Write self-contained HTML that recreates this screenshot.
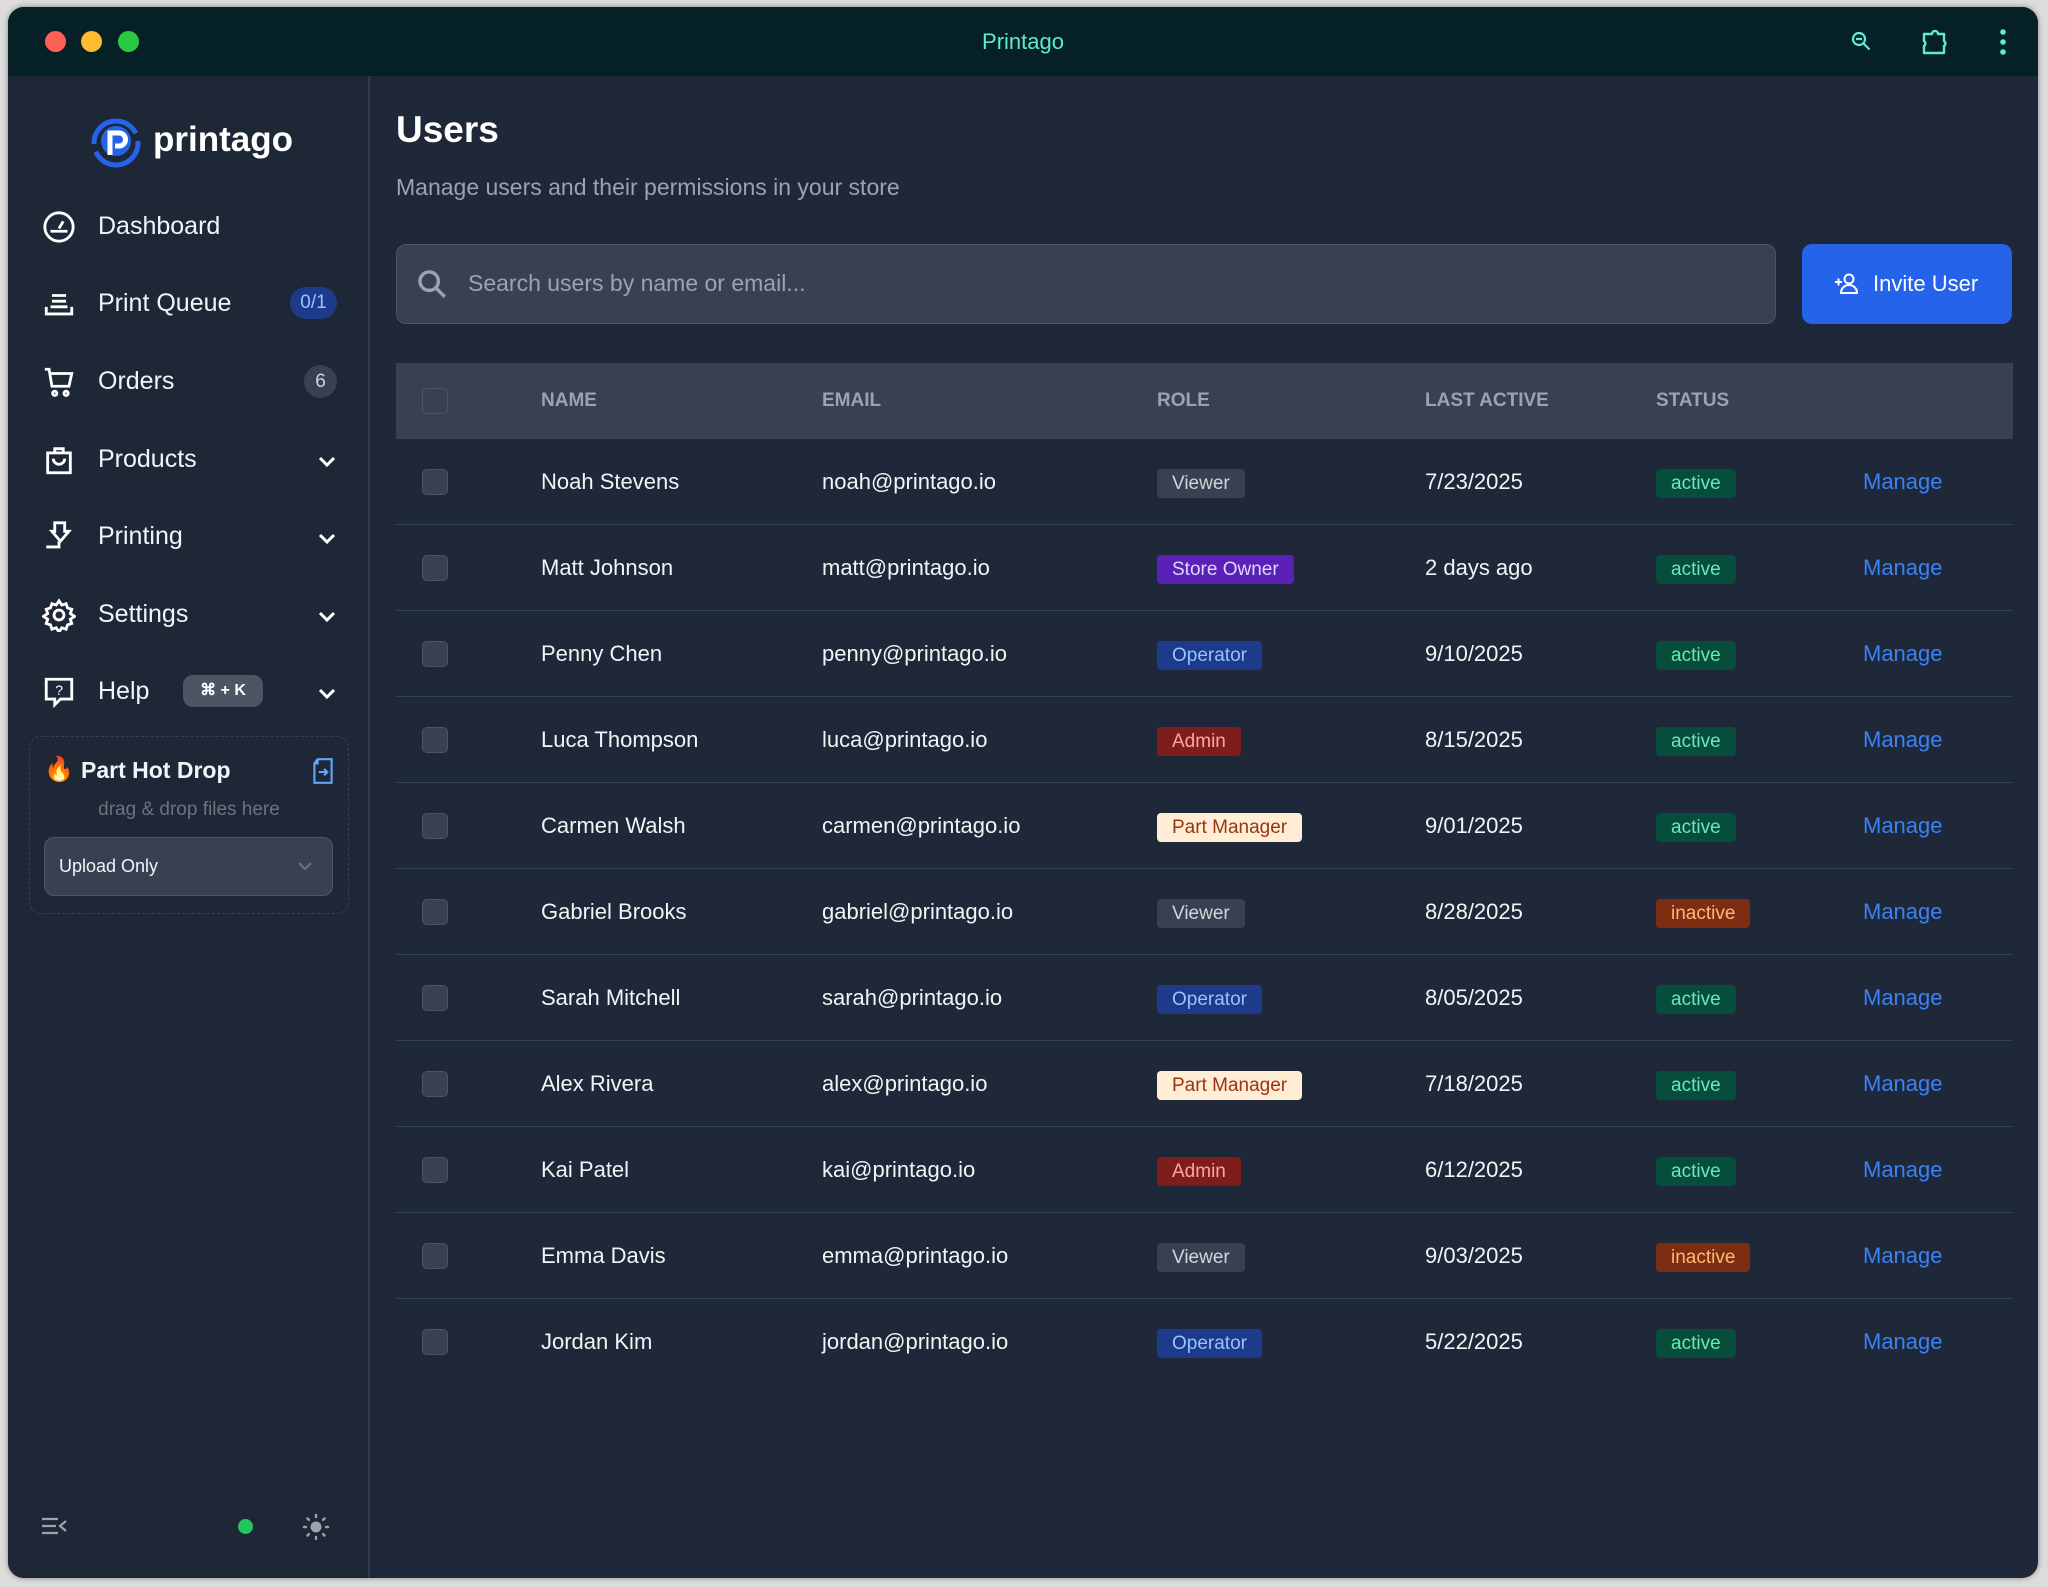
<!DOCTYPE html>
<html><head><meta charset="utf-8"><style>
*{box-sizing:border-box;margin:0;padding:0}
body{width:2048px;height:1587px;background:#dcdcdc;font-family:"Liberation Sans",sans-serif;position:relative;overflow:hidden}
.win{position:absolute;left:8px;top:7px;width:2030px;height:1571px;border-radius:16px;overflow:hidden;background:#1e2838;box-shadow:0 0 6px rgba(0,0,0,.4)}
.tb{position:absolute;left:0;top:0;width:100%;height:69px;background:#062125}
.dot{position:absolute;top:24px;width:21px;height:21px;border-radius:50%}
.abs{position:absolute}
.side{position:absolute;left:0;top:69px;width:362px;bottom:0;background:#1e2736;border-right:2px solid #2f3a4a}
.nav{position:absolute;left:0;width:362px;height:50px;color:#f1f5f9;font-size:25px}
.nav .t{position:absolute;left:90px;top:10px}
.nav svg{position:absolute;left:34px;top:8px}
.nav .chev{position:absolute;left:307px;top:14px}
.main{position:absolute;left:362px;top:69px;right:0;bottom:0}
.th{position:absolute;top:401px;font-size:19px;font-weight:bold;color:#9ca3af;transform:translateY(-50%)}
.row{position:absolute;left:388px;width:1617px;height:86px;border-bottom:1px solid #334155}
.cell{position:absolute;top:50%;transform:translateY(-50%);font-size:22px;color:#f3f4f6;white-space:nowrap}
.cb{position:absolute;left:414px;width:26px;height:26px;border-radius:5px;background:#374151;border:1px solid #4b5563}
.bd{padding:4px 15px;border-radius:4px;font-size:19px}
</style></head><body>
<div class="win">
 <div class="tb">
  <div class="dot" style="left:37px;background:#fe5f57"></div>
  <div class="dot" style="left:73px;background:#febc2e"></div>
  <div class="dot" style="left:110px;background:#28c840"></div>
  <div class="abs" style="left:0;width:100%;top:22px;text-align:center;color:#5eead4;font-size:22px">Printago</div>
  <svg class="abs" style="left:1842px;top:23px" width="24" height="24" viewBox="0 0 24 24" fill="none" stroke="#5eead4" stroke-width="2.2"><circle cx="9" cy="9" r="6"/><path d="M13.5 13.5l6 6M6 9h6"/></svg>
  <svg class="abs" style="left:1912px;top:20px" width="30" height="30" viewBox="0 0 30 30" fill="none" stroke="#5eead4" stroke-width="2.4"><path d="M4 7h8a3 3 0 016 0h6v7a3 3 0 010 5v7H4V19a3 3 0 000-5z" stroke-linejoin="round"/></svg>
  <svg class="abs" style="left:1990px;top:20px" width="10" height="30"><circle cx="5" cy="5" r="2.8" fill="#5eead4"/><circle cx="5" cy="15" r="2.8" fill="#5eead4"/><circle cx="5" cy="25" r="2.8" fill="#5eead4"/></svg>
 </div>
 <div class="side">
  <svg class="abs" style="left:80px;top:39px" width="56" height="56" viewBox="0 0 56 56"><circle cx="28" cy="28" r="22" fill="none" stroke="#2563eb" stroke-width="5" stroke-dasharray="60 8"/><circle cx="28" cy="26" r="15" fill="#2563eb"/><path d="M22 40V18h9a6.5 6.5 0 010 13h-4" fill="none" stroke="#fff" stroke-width="5"/></svg>
  <div class="abs" style="left:145px;top:44px;color:#fff;font-size:35px;font-weight:bold">printago</div>
  <div class="nav" style="top:126px"><svg width="34" height="34" viewBox="0 0 24 24" fill="none" stroke="#fff" stroke-width="2"><circle cx="12" cy="12" r="10"/><path d="M12 13l3-5M6 15h12"/></svg><span class="t">Dashboard</span></div>
  <div class="nav" style="top:203px"><svg width="34" height="34" viewBox="0 0 24 24" fill="none" stroke="#fff" stroke-width="2"><path d="M3 14v5h18v-5M6 14h12M7 10h10M7 6h10"/></svg><span class="t">Print Queue</span><span class="abs" style="left:282px;top:8px;width:47px;height:32px;border-radius:16px;background:#1e3a8a;color:#93c5fd;font-size:19px;text-align:center;line-height:32px">0/1</span></div>
  <div class="nav" style="top:281px"><svg width="34" height="34" viewBox="0 0 24 24" fill="none" stroke="#fff" stroke-width="2"><path d="M2 3h3l2 12h12l2-9H6"/><circle cx="9" cy="20" r="1.5"/><circle cx="17" cy="20" r="1.5"/></svg><span class="t">Orders</span><span class="abs" style="left:296px;top:8px;width:33px;height:33px;border-radius:50%;background:#374151;color:#d1d5db;font-size:19px;text-align:center;line-height:33px">6</span></div>
  <div class="nav" style="top:359px"><svg width="34" height="34" viewBox="0 0 24 24" fill="none" stroke="#fff" stroke-width="2"><rect x="4" y="7" width="16" height="14"/><path d="M9 7V4h6v3M8 11a4 4 0 008 0"/></svg><span class="t">Products</span><svg class="chev" width="24" height="24" viewBox="0 0 24 24" fill="none" stroke="#fff" stroke-width="3"><path d="M5 9l7 7 7-7"/></svg></div>
  <div class="nav" style="top:436px"><svg width="34" height="34" viewBox="0 0 24 24" fill="none" stroke="#fff" stroke-width="2"><path d="M9 2h7v6h3l-6 7-6-7h2zM12 15v4H3"/></svg><span class="t">Printing</span><svg class="chev" width="24" height="24" viewBox="0 0 24 24" fill="none" stroke="#fff" stroke-width="3"><path d="M5 9l7 7 7-7"/></svg></div>
  <div class="nav" style="top:514px"><svg width="34" height="34" viewBox="0 0 24 24" fill="none" stroke="#fff" stroke-width="2"><circle cx="12" cy="12" r="3.5"/><path d="M12 2l2 3 3-1 1 3 3 1-1 3 3 2-3 2 1 3-3 1-1 3-3-1-2 3-2-3-3 1-1-3-3-1 1-3-3-2 3-2-1-3 3-1 1-3 3 1z"/></svg><span class="t">Settings</span><svg class="chev" width="24" height="24" viewBox="0 0 24 24" fill="none" stroke="#fff" stroke-width="3"><path d="M5 9l7 7 7-7"/></svg></div>
  <div class="nav" style="top:591px"><svg width="34" height="34" viewBox="0 0 24 24" fill="none" stroke="#fff" stroke-width="2"><path d="M3 3h18v14H13l-4 4v-4H3z"/><text x="12" y="14" font-size="10" fill="#fff" stroke="none" text-anchor="middle" font-family="Liberation Sans">?</text></svg><span class="t">Help</span><span class="abs" style="left:175px;top:8px;width:80px;height:32px;border-radius:10px;background:#4b5563;color:#fff;font-size:16px;font-weight:bold;text-align:center;line-height:32px">⌘ + K</span><svg class="chev" width="24" height="24" viewBox="0 0 24 24" fill="none" stroke="#fff" stroke-width="3"><path d="M5 9l7 7 7-7"/></svg></div>
  <div class="abs" style="left:21px;top:660px;width:320px;height:178px;border:1px dashed #334155;border-radius:12px">
   <div class="abs" style="left:14px;top:18px;font-size:24px">🔥</div>
   <div class="abs" style="left:51px;top:20px;color:#f1f5f9;font-size:23px;font-weight:bold">Part Hot Drop</div>
   <svg class="abs" style="left:280px;top:20px" width="26" height="28" viewBox="0 0 24 26" fill="none" stroke="#60a5fa" stroke-width="2"><path d="M7 2h13v22H4V6zM7 2v4H4M8 14h8m-3-3l3 3-3 3"/></svg>
   <div class="abs" style="left:0;width:100%;top:62px;text-align:center;color:#6b7280;font-size:19px">drag &amp; drop files here</div>
   <div class="abs" style="left:14px;top:100px;width:289px;height:59px;border-radius:10px;background:#374151;border:1px solid #4b5563;color:#f1f5f9;font-size:18px;line-height:57px;padding-left:14px">Upload Only<svg class="abs" style="left:252px;top:22px" width="16" height="12" viewBox="0 0 16 12" fill="none" stroke="#6b7280" stroke-width="2"><path d="M2 3l6 6 6-6"/></svg></div>
  </div>
  <svg class="abs" style="left:32px;top:1440px" width="28" height="20" viewBox="0 0 28 20" fill="none" stroke="#9ca3af" stroke-width="2.2"><path d="M2 3h16M2 10h14M2 17h16M26 5l-6 5 6 5"/></svg>
  <div class="abs" style="left:230px;top:1443px;width:15px;height:15px;border-radius:50%;background:#22c55e"></div>
  <svg class="abs" style="left:294px;top:1437px" width="28" height="28" viewBox="0 0 28 28" fill="#9ca3af" stroke="#9ca3af" stroke-width="2.4" stroke-linecap="round"><circle cx="14" cy="14" r="5.5" stroke="none"/><path d="M14 2v2M14 24v2M2 14h2M24 14h2M5.5 5.5l1.4 1.4M21.1 21.1l1.4 1.4M5.5 22.5l1.4-1.4M21.1 6.9l1.4-1.4"/></svg>
 </div>
 <div class="main">
  <div class="abs" style="left:26px;top:33px;color:#fff;font-size:37px;font-weight:bold">Users</div>
  <div class="abs" style="left:26px;top:98px;color:#9ca3af;font-size:23px">Manage users and their permissions in your store</div>
  <div class="abs" style="left:26px;top:168px;width:1380px;height:80px;border-radius:10px;background:#374151;border:1px solid #4b5563">
   <svg class="abs" style="left:18px;top:22px" width="34" height="34" viewBox="0 0 24 24" fill="none" stroke="#9ca3af" stroke-width="2.4"><circle cx="10" cy="10" r="6.5"/><path d="M15 15l6 6"/></svg>
   <div class="abs" style="left:71px;top:25px;color:#9ca3af;font-size:23px">Search users by name or email...</div>
  </div>
  <div class="abs" style="left:1432px;top:168px;width:210px;height:80px;border-radius:10px;background:#2563eb;color:#fff;font-size:22px;line-height:80px">
   <svg class="abs" style="left:32px;top:27px" width="26" height="26" viewBox="0 0 26 26" fill="none" stroke="#fff" stroke-width="2"><circle cx="15" cy="8" r="4.5"/><path d="M7 22c0-5 4-8 8-8s8 3 8 8zM1 11h7M4.5 7.5v7"/></svg>
   <span class="abs" style="left:71px">Invite User</span>
  </div>
 </div>
 <div class="abs" style="left:388px;top:356px;width:1617px;height:76px;background:#374151"></div>
 <div class="cb" style="top:381px;background:#374151;border-color:#4b5563"></div>
 <div class="th" style="left:533px;top:394px">NAME</div>
 <div class="th" style="left:814px;top:394px">EMAIL</div>
 <div class="th" style="left:1149px;top:394px">ROLE</div>
 <div class="th" style="left:1417px;top:394px">LAST ACTIVE</div>
 <div class="th" style="left:1648px;top:394px">STATUS</div>
 <div id="rows"></div>
</div>
<script>
var d=[["Noah Stevens","noah@printago.io","Viewer","7/23/2025","active"],["Matt Johnson","matt@printago.io","Store Owner","2 days ago","active"],["Penny Chen","penny@printago.io","Operator","9/10/2025","active"],["Luca Thompson","luca@printago.io","Admin","8/15/2025","active"],["Carmen Walsh","carmen@printago.io","Part Manager","9/01/2025","active"],["Gabriel Brooks","gabriel@printago.io","Viewer","8/28/2025","inactive"],["Sarah Mitchell","sarah@printago.io","Operator","8/05/2025","active"],["Alex Rivera","alex@printago.io","Part Manager","7/18/2025","active"],["Kai Patel","kai@printago.io","Admin","6/12/2025","active"],["Emma Davis","emma@printago.io","Viewer","9/03/2025","inactive"],["Jordan Kim","jordan@printago.io","Operator","5/22/2025","active"]];
var rc={"Viewer":["#374151","#d1d5db"],"Store Owner":["#5b21b6","#ddd6fe"],"Operator":["#1e3a8a","#93c5fd"],"Admin":["#7f1d1d","#fca5a5"],"Part Manager":["#ffedd5","#9a3412"]};
var sc={"active":["#064e3b","#6ee7b7"],"inactive":["#7c2d12","#fdba74"]};
var h="";
d.forEach(function(r,i){var t=432+i*86;var c=rc[r[2]],s=sc[r[4]];
h+='<div class="row" style="top:'+t+'px;'+(i==10?'border:none':'')+'"></div>';
h+='<div class="cb" style="top:'+(t+30)+'px"></div>';
var cs=function(x,html){return '<div class="cell" style="left:'+x+'px;top:'+(t+43)+'px">'+html+'</div>'};
h+=cs(533,r[0])+cs(814,r[1])+cs(1149,'<span class="bd" style="background:'+c[0]+';color:'+c[1]+'">'+r[2]+'</span>')+cs(1417,r[3])+cs(1648,'<span class="bd" style="background:'+s[0]+';color:'+s[1]+'">'+r[4]+'</span>')+cs(1855,'<span style="color:#3b82f6">Manage</span>');
});
document.getElementById('rows').innerHTML=h;
</script>
</body></html>
